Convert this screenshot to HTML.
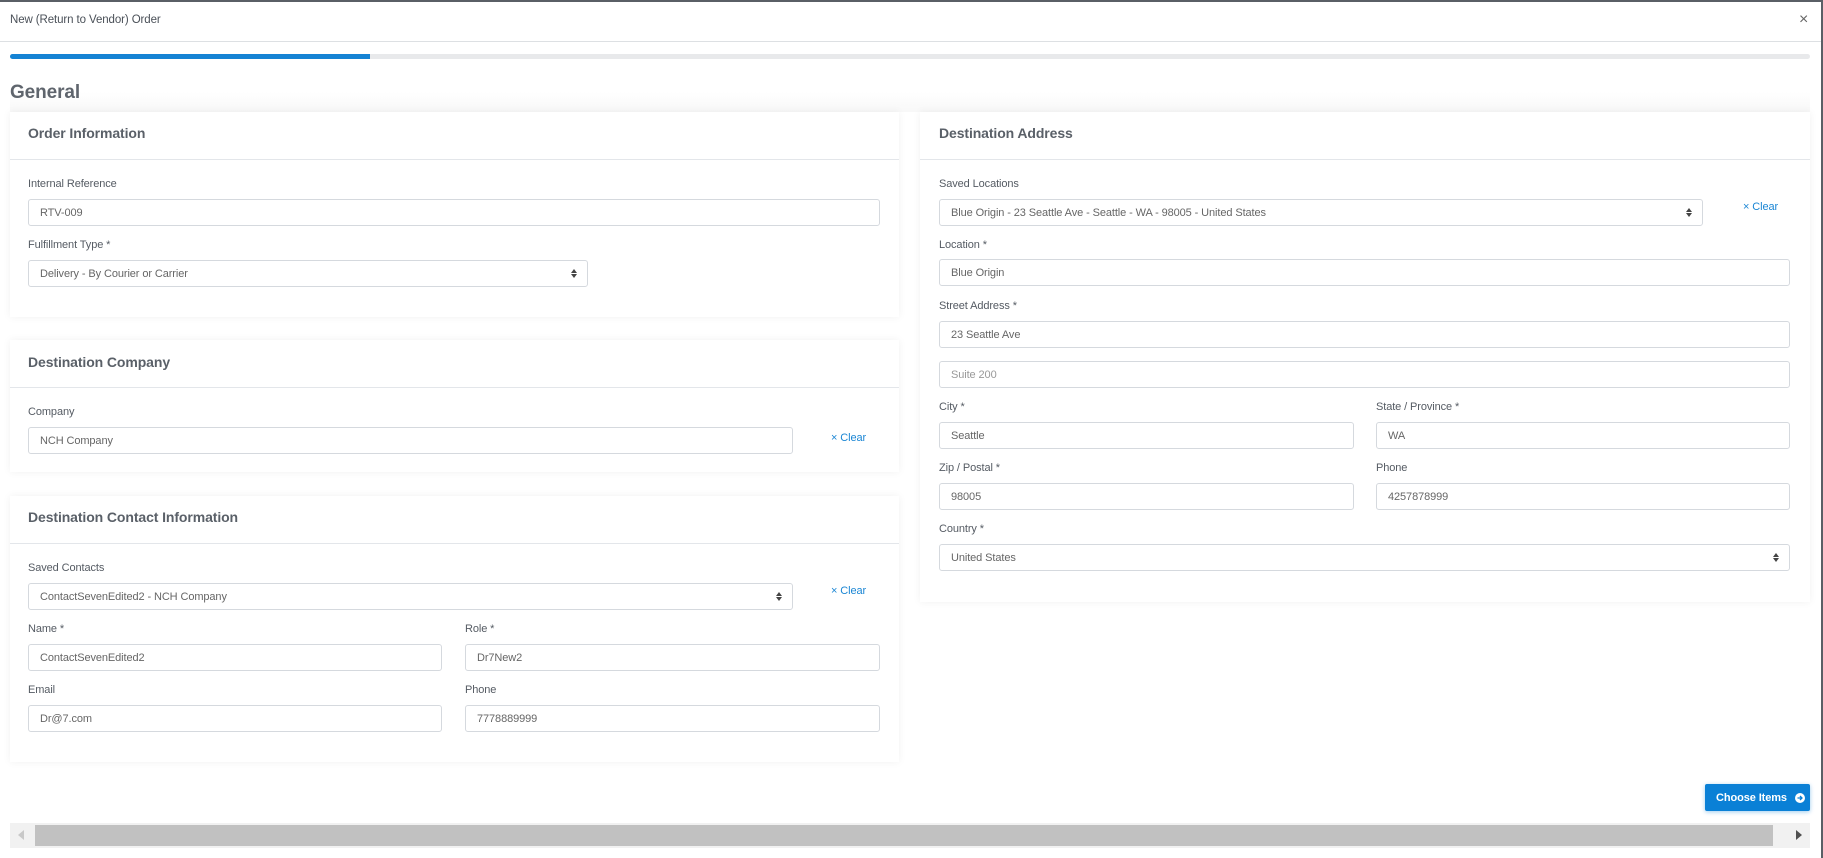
<!DOCTYPE html>
<html><head><meta charset="utf-8"><style>
*{box-sizing:border-box;margin:0;padding:0}
body{width:1823px;height:858px;background:#5a5f66;font-family:"Liberation Sans",sans-serif;color:#555b63;position:relative;overflow:hidden;letter-spacing:-0.1px}
#m{position:absolute;left:0;top:2px;width:1821px;height:856px;background:#fff}
.a{position:absolute}
.hdr{left:10px;top:12px;font-size:11.5px;color:#4a5058}
.x{left:1799px;top:9px;font-size:16px;color:#666}
.card{position:absolute;background:#fff;box-shadow:0 0 8px rgba(0,0,0,0.06)}
.t{position:absolute;font-size:14px;font-weight:bold;color:#5a6068}
.dv{position:absolute;height:1px;background:#e3e6ea}
.l{position:absolute;font-size:11px;color:#555b63}
.i{position:absolute;height:27px;border:1px solid #d5d9de;border-radius:3px;font-size:11px;color:#666;padding:0 11px;line-height:26px;background:#fff;white-space:nowrap}
.s::after{content:"";position:absolute;right:10px;top:8px;border:3px solid transparent;border-bottom:4px solid #444;border-top:0}
.s::before{content:"";position:absolute;right:10px;top:13px;border:3px solid transparent;border-top:4px solid #444;border-bottom:0}
.c{position:absolute;font-size:11px;color:#1b86d4}
</style></head><body><div id="m">
<div class="a hdr">New (Return to Vendor) Order</div>
<div class="a x">×</div>
<div class="a" style="left:0;top:39px;width:1821px;height:1px;background:#dde0e3"></div>
<div class="a" style="left:10px;top:52px;width:1800px;height:5px;background:#e8e9eb;border-radius:3px"></div>
<div class="a" style="left:10px;top:52px;width:360px;height:5px;background:#1583d4;border-radius:3px 0 0 3px"></div>
<div class="a" style="left:10px;top:90px;width:1800px;height:20px;background:linear-gradient(#fff,#f8f8f8)"></div>
<div class="a" style="left:10px;top:80px;font-size:19px;font-weight:bold;color:#5f656d">General</div>

<div class="card" style="left:10px;top:110px;width:889px;height:205px"></div>
<div class="t" style="left:28px;top:123px">Order Information</div>
<div class="dv" style="left:10px;top:157px;width:889px"></div>
<div class="l" style="left:28px;top:176px">Internal Reference</div>
<div class="i" style="left:28px;top:197px;width:852px">RTV-009</div>
<div class="l" style="left:28px;top:237px">Fulfillment Type *</div>
<div class="i s" style="left:28px;top:258px;width:560px">Delivery - By Courier or Carrier</div>

<div class="card" style="left:10px;top:338px;width:889px;height:132px"></div>
<div class="t" style="left:28px;top:352px">Destination Company</div>
<div class="dv" style="left:10px;top:385px;width:889px"></div>
<div class="l" style="left:28px;top:404px">Company</div>
<div class="i" style="left:28px;top:425px;width:765px">NCH Company</div>
<div class="c" style="left:831px;top:430px">× Clear</div>

<div class="card" style="left:10px;top:494px;width:889px;height:266px"></div>
<div class="t" style="left:28px;top:507px">Destination Contact Information</div>
<div class="dv" style="left:10px;top:541px;width:889px"></div>
<div class="l" style="left:28px;top:560px">Saved Contacts</div>
<div class="i s" style="left:28px;top:581px;width:765px">ContactSevenEdited2 - NCH Company</div>
<div class="c" style="left:831px;top:583px">× Clear</div>
<div class="l" style="left:28px;top:621px">Name *</div>
<div class="l" style="left:465px;top:621px">Role *</div>
<div class="i" style="left:28px;top:642px;width:414px">ContactSevenEdited2</div>
<div class="i" style="left:465px;top:642px;width:415px">Dr7New2</div>
<div class="l" style="left:28px;top:682px">Email</div>
<div class="l" style="left:465px;top:682px">Phone</div>
<div class="i" style="left:28px;top:703px;width:414px">Dr@7.com</div>
<div class="i" style="left:465px;top:703px;width:415px">7778889999</div>

<div class="card" style="left:920px;top:110px;width:890px;height:490px"></div>
<div class="t" style="left:939px;top:123px">Destination Address</div>
<div class="dv" style="left:920px;top:157px;width:890px"></div>
<div class="l" style="left:939px;top:176px">Saved Locations</div>
<div class="i s" style="left:939px;top:197px;width:764px">Blue Origin - 23 Seattle Ave - Seattle - WA - 98005 - United States</div>
<div class="c" style="left:1743px;top:199px">× Clear</div>
<div class="l" style="left:939px;top:237px">Location *</div>
<div class="i" style="left:939px;top:257px;width:851px">Blue Origin</div>
<div class="l" style="left:939px;top:298px">Street Address *</div>
<div class="i" style="left:939px;top:319px;width:851px">23 Seattle Ave</div>
<div class="i" style="left:939px;top:359px;width:851px;color:#999">Suite 200</div>
<div class="l" style="left:939px;top:399px">City *</div>
<div class="l" style="left:1376px;top:399px">State / Province *</div>
<div class="i" style="left:939px;top:420px;width:415px">Seattle</div>
<div class="i" style="left:1376px;top:420px;width:414px">WA</div>
<div class="l" style="left:939px;top:460px">Zip / Postal *</div>
<div class="l" style="left:1376px;top:460px">Phone</div>
<div class="i" style="left:939px;top:481px;width:415px">98005</div>
<div class="i" style="left:1376px;top:481px;width:414px">4257878999</div>
<div class="l" style="left:939px;top:521px">Country *</div>
<div class="i s" style="left:939px;top:542px;width:851px">United States</div>

<div class="a" style="left:1705px;top:782px;width:105px;height:27px;background:#0a80d6;border-radius:2px;box-shadow:0 1px 4px rgba(10,128,214,.4);color:#fff;font-size:11px;font-weight:bold;display:flex;align-items:center;padding-left:11px;white-space:nowrap"><span>Choose Items</span><svg width="10" height="10" viewBox="0 0 10 10" style="margin-left:8px;flex:none"><circle cx="5" cy="5" r="5" fill="#fff"/><path d="M2.5 5h4.5M5 3l2 2-2 2" stroke="#0a80d6" stroke-width="1.3" fill="none"/></svg></div>

<div class="a" style="left:10px;top:821px;width:1800px;height:25px;background:#f1f1f1"></div>
<div class="a" style="left:35px;top:823px;width:1738px;height:21px;background:#c1c1c1"></div>
<div class="a" style="left:18px;top:828px;border:5px solid transparent;border-right:6px solid #c8c8c8;border-left:0"></div>
<div class="a" style="left:1796px;top:828px;border:5px solid transparent;border-left:6px solid #505050;border-right:0"></div>
</div></body></html>
